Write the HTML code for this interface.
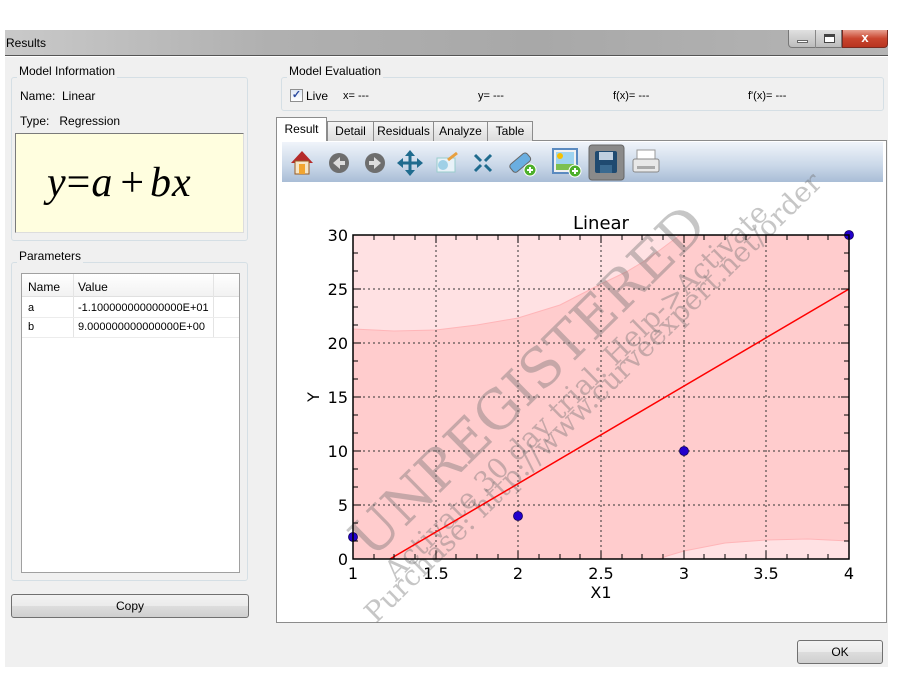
<!DOCTYPE html>
<html><head><meta charset="utf-8"><style>
*{margin:0;padding:0;box-sizing:border-box}
body{width:897px;height:674px;background:#fff;position:relative;overflow:hidden;font-family:"Liberation Sans",sans-serif;font-size:12px;color:#000}
.a{position:absolute}
.gb{position:absolute;border:1px solid #d5dfe5;border-radius:3px}
.gt{position:absolute;background:#f0f0f0;padding:0 2px;font-size:12px}
.btn{position:absolute;border:1px solid #707070;border-radius:3px;background:linear-gradient(#f2f2f2,#ebebeb 50%,#dddddd 51%,#cfcfcf);text-align:center;font-size:12px}
.tab{position:absolute;top:121px;height:20px;border:1px solid #8c8c8c;border-bottom:none;background:linear-gradient(#f5f5f5,#dcdcdc);font-size:12px;text-align:center;line-height:19px}
</style></head><body>
<div class="a" style="left:5px;top:30px;width:883px;height:26px;background:linear-gradient(90deg,#c9c9c9,#b0b0b0 30%,#a8a8a8 60%,#b5b5b5);border-bottom:1px solid #555"></div>
<div class="a" style="left:6px;top:36px;font-size:12px">Results</div>
<div class="a" style="left:788px;top:30px;width:54px;height:18px;border:1px solid #777;border-top:none;border-radius:0 0 0 4px;background:linear-gradient(#e0e0e0,#bcbcbc)"></div>
<div class="a" style="left:815px;top:30px;width:1px;height:18px;background:#888"></div>
<div class="a" style="left:797px;top:40px;width:11px;height:3px;background:#fff;border:1px solid #666"></div>
<div class="a" style="left:824px;top:34px;width:11px;height:9px;border:1px solid #444;border-top:3px solid #444;background:#fff"></div>
<div class="a" style="left:842px;top:30px;width:46px;height:18px;border:1px solid #7a2a20;border-top:none;border-radius:0 0 4px 0;background:linear-gradient(#e8a090,#c9452e 50%,#b83420);color:#fff;font-weight:bold;text-align:center;line-height:16px;font-size:13px">x</div>
<div class="a" style="left:5px;top:57px;width:883px;height:610px;background:#f0f0f0"></div>

<div class="gb" style="left:11px;top:77px;width:237px;height:164px"></div>
<div class="gt" style="left:17px;top:64px">Model Information</div>
<div class="a" style="left:20px;top:89px">Name:&nbsp; Linear</div>
<div class="a" style="left:20px;top:114px">Type:&nbsp;&nbsp; Regression</div>
<div class="a" style="left:15px;top:133px;width:229px;height:100px;background:#fffedf;border:1px solid #7a7a7a;border-right-color:#ddd;border-bottom-color:#ddd"></div>
<div class="a" style="left:47px;top:161px;font-family:'Liberation Serif',serif;font-style:italic;font-size:42px;line-height:44px;white-space:nowrap">y<span style="font-style:normal;margin:0 1px">=</span>a<span style="font-style:normal;margin:0 6px 0 8px">+</span>b<span style="margin-left:1px">x</span></div>

<div class="gb" style="left:11px;top:262px;width:237px;height:319px"></div>
<div class="gt" style="left:17px;top:249px">Parameters</div>
<div class="a" style="left:21px;top:273px;width:219px;height:300px;background:#fff;border:1px solid #a0a0a0"></div>
<div class="a" style="left:22px;top:274px;width:217px;height:23px;background:linear-gradient(#fff,#f2f2f2);border-bottom:1px solid #e0e0e0"></div>
<div class="a" style="left:73px;top:274px;width:1px;height:63px;background:#e4e4e4"></div>
<div class="a" style="left:213px;top:274px;width:1px;height:63px;background:#e4e4e4"></div>
<div class="a" style="left:22px;top:317px;width:217px;height:1px;background:#ececec"></div>
<div class="a" style="left:22px;top:337px;width:217px;height:1px;background:#ececec"></div>
<div class="a" style="left:28px;top:280px">Name</div>
<div class="a" style="left:78px;top:280px">Value</div>
<div class="a" style="left:28px;top:302px;font-size:11px">a</div>
<div class="a" style="left:78px;top:302px;font-size:11px">-1.100000000000000E+01</div>
<div class="a" style="left:28px;top:321px;font-size:11px">b</div>
<div class="a" style="left:78px;top:321px;font-size:11px">9.000000000000000E+00</div>
<div class="btn" style="left:11px;top:594px;width:238px;height:24px;line-height:22px">Copy</div>

<div class="gb" style="left:281px;top:77px;width:603px;height:34px"></div>
<div class="gt" style="left:287px;top:64px">Model Evaluation</div>
<div class="a" style="left:290px;top:89px;width:13px;height:13px;border:1px solid #8f8f8f;background:linear-gradient(#dfe8f5,#fff);color:#2a4aa0;font-size:11px;line-height:11px;text-align:center;font-weight:bold">✓</div>
<div class="a" style="left:306px;top:89px">Live</div>
<div class="a" style="left:343px;top:90px;font-size:11px">x= ---</div>
<div class="a" style="left:478px;top:90px;font-size:11px">y= ---</div>
<div class="a" style="left:613px;top:90px;font-size:11px">f(x)= ---</div>
<div class="a" style="left:748px;top:90px;font-size:11px">f'(x)= ---</div>

<div class="a" style="left:276px;top:140px;width:611px;height:483px;background:#fff;border:1px solid #8c8c8c"></div>
<div class="tab" style="left:327px;width:47px">Detail</div>
<div class="tab" style="left:373px;width:61px">Residuals</div>
<div class="tab" style="left:433px;width:55px">Analyze</div>
<div class="tab" style="left:487px;width:46px">Table</div>
<div class="tab" style="left:276px;top:117px;width:51px;height:24px;background:#fff;line-height:22px;z-index:2">Result</div>

<div class="a" style="left:282px;top:142px;width:601px;height:40px;background:linear-gradient(#f0f4fa,#c9d7e8 60%,#a9bdd6)"></div>
<svg class="a" style="left:0;top:0" width="897" height="674">
 <polygon points="291,163 302,151 313,163" fill="#b52a2a"/>
 <rect x="295" y="161" width="14" height="13" fill="#f5e6c8" stroke="#9a5a20"/>
 <rect x="299" y="164" width="6" height="10" fill="#f2a530"/>
 <circle cx="339" cy="163" r="10" fill="#6e6e6e"/><polygon points="333,163 340,157 340,169" fill="#ddd"/><rect x="339" y="161" width="6" height="4" fill="#ddd"/>
 <circle cx="375" cy="163" r="10" fill="#6e6e6e"/><polygon points="381,163 374,157 374,169" fill="#ddd"/><rect x="369" y="161" width="6" height="4" fill="#ddd"/>
 <g stroke="#1f6b8e" stroke-width="3" fill="#1f6b8e"><line x1="410" y1="153" x2="410" y2="173"/><line x1="400" y1="163" x2="420" y2="163"/></g>
 <g fill="#1f6b8e"><polygon points="410,150 405,156 415,156"/><polygon points="410,176 405,170 415,170"/><polygon points="397,163 403,158 403,168"/><polygon points="423,163 417,158 417,168"/></g>
 <rect x="437" y="158" width="18" height="14" fill="#e8f2f8" stroke="#9cc"/><circle cx="443" cy="165" r="5" fill="#9fd0e6"/><line x1="448" y1="160" x2="457" y2="153" stroke="#e8a040" stroke-width="3"/>
 <g stroke="#1f6b8e" stroke-width="3"><line x1="475" y1="155" x2="481" y2="161"/><line x1="491" y1="155" x2="485" y2="161"/><line x1="475" y1="171" x2="481" y2="165"/><line x1="491" y1="171" x2="485" y2="165"/></g>
 <g transform="rotate(-40 521 162)"><rect x="509" y="157" width="22" height="10" rx="3" fill="#6aaee0" stroke="#666"/></g>
 <circle cx="530" cy="170" r="6" fill="#4caf2a" stroke="#fff"/><path d="M527 170h6M530 167v6" stroke="#fff" stroke-width="2"/>
 <rect x="553" y="149" width="24" height="24" fill="#f0f0f0" stroke="#5a8ac0" stroke-width="2"/><rect x="556" y="152" width="18" height="18" fill="#9fd4f0"/><rect x="556" y="164" width="18" height="6" fill="#7cc050"/><circle cx="560" cy="156" r="3" fill="#f5c000"/>
 <circle cx="575" cy="171" r="6" fill="#4caf2a" stroke="#fff"/><path d="M572 171h6M575 168v6" stroke="#fff" stroke-width="2"/>
 <rect x="589" y="145" width="35" height="35" rx="3" fill="#8a8a8a" stroke="#666"/>
 <rect x="595" y="151" width="22" height="22" rx="2" fill="#1f4a70"/><rect x="599" y="152" width="14" height="8" fill="#c0d0e0"/><rect x="600" y="165" width="12" height="8" fill="#3a6a90"/>
 <rect x="637" y="150" width="18" height="10" fill="#fff" stroke="#999"/><rect x="633" y="159" width="26" height="13" rx="2" fill="#e8e8e8" stroke="#888"/><rect x="637" y="166" width="18" height="3" fill="#aaa"/>

 <rect x="353" y="235" width="496" height="324" fill="#ffe1e3"/>
 <path d="M353,329 L394,331 436,330 477,325 518,318 560,305 601,284 626,272 643,262 660,250 676,238 680,235 L849,235 849,541 808,539 766,540 725,543 684,551 667,556 659,559 353,559Z" fill="#ffcccd"/>
 <path d="M353,329 L394,331 436,330 477,325 518,318 560,305 601,284 626,272 643,262 660,250 676,238 680,235" fill="none" stroke="#ffb5b8" stroke-width="1"/>
 <path d="M659,559 667,556 684,551 725,543 766,540 808,539 849,541" fill="none" stroke="#ffb5b8" stroke-width="1"/>
 <g stroke="#333" stroke-width="1" stroke-dasharray="2,3">
  <line x1="436" y1="235" x2="436" y2="559"/><line x1="518" y1="235" x2="518" y2="559"/><line x1="601" y1="235" x2="601" y2="559"/><line x1="684" y1="235" x2="684" y2="559"/><line x1="766" y1="235" x2="766" y2="559"/>
  <line x1="353" y1="505" x2="849" y2="505"/><line x1="353" y1="451" x2="849" y2="451"/><line x1="353" y1="397" x2="849" y2="397"/><line x1="353" y1="343" x2="849" y2="343"/><line x1="353" y1="289" x2="849" y2="289"/>
 </g>
 <g fill="#707070" fill-opacity="0.4" font-family="DejaVu Serif,serif">
  <text transform="translate(372,560) rotate(-44.5)" font-size="54">UNREGISTERED</text>
  <text transform="translate(396,582) rotate(-44.5)" font-size="28">Activate 30 day trial: Help-&gt;Activate</text>
  <text transform="translate(376,624) rotate(-44.5)" font-size="28">Purchase: http://www.curveexpert.net/order</text>
 </g>
 <line x1="390" y1="559" x2="849" y2="289" stroke="#f00" stroke-width="1.5"/>
 <g fill="#2200cc" stroke="#10005a" stroke-width="0.8">
  <circle cx="353" cy="537" r="4.5"/><circle cx="518" cy="516" r="4.5"/><circle cx="684" cy="451" r="4.5"/><circle cx="849" cy="235" r="4.5"/>
 </g>
 <rect x="353" y="235" width="496" height="324" fill="none" stroke="#000" stroke-width="1.5"/>
 <g stroke="#000" stroke-width="1">
  <path d="M374,559v-5M394,559v-5M415,559v-5M436,559v-8M456,559v-5M477,559v-5M498,559v-5M518,559v-8M539,559v-5M560,559v-5M580,559v-5M601,559v-8M622,559v-5M642,559v-5M663,559v-5M684,559v-8M704,559v-5M725,559v-5M746,559v-5M766,559v-8M787,559v-5M808,559v-5M828,559v-5"/>
  <path d="M374,235v5M394,235v5M415,235v5M436,235v8M456,235v5M477,235v5M498,235v5M518,235v8M539,235v5M560,235v5M580,235v5M601,235v8M622,235v5M642,235v5M663,235v5M684,235v8M704,235v5M725,235v5M746,235v5M766,235v8M787,235v5M808,235v5M828,235v5"/>
  <path d="M353,541h5M353,523h5M353,505h8M353,487h5M353,469h5M353,451h8M353,433h5M353,415h5M353,397h8M353,379h5M353,361h5M353,343h8M353,325h5M353,307h5M353,289h8M353,271h5M353,253h5"/>
  <path d="M849,541h-5M849,523h-5M849,505h-8M849,487h-5M849,469h-5M849,451h-8M849,433h-5M849,415h-5M849,397h-8M849,379h-5M849,361h-5M849,343h-8M849,325h-5M849,307h-5M849,289h-8M849,271h-5M849,253h-5"/>
 </g>
 <g font-family="DejaVu Sans,sans-serif" font-size="16" fill="#000">
  <text x="601" y="229" text-anchor="middle" font-size="18">Linear</text>
  <g text-anchor="middle">
   <text x="353" y="579">1</text><text x="436" y="579">1.5</text><text x="518" y="579">2</text><text x="601" y="579">2.5</text><text x="684" y="579">3</text><text x="766" y="579">3.5</text><text x="849" y="579">4</text>
   <text x="601" y="598">X1</text>
  </g>
  <g text-anchor="end">
   <text x="348" y="565">0</text><text x="348" y="511">5</text><text x="348" y="457">10</text><text x="348" y="403">15</text><text x="348" y="349">20</text><text x="348" y="295">25</text><text x="348" y="241">30</text>
  </g>
  <text transform="translate(319,397) rotate(-90)" text-anchor="middle">Y</text>
 </g>
</svg>
<div class="btn" style="left:797px;top:640px;width:86px;height:24px;line-height:22px">OK</div>
</body></html>
